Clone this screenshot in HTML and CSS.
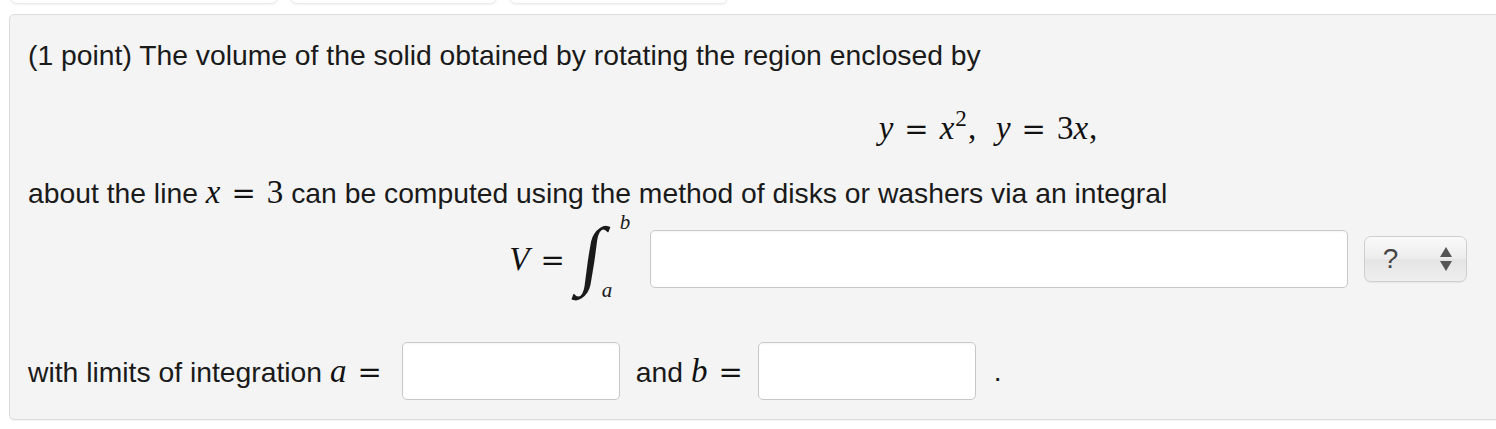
FILE: index.html
```html
<!DOCTYPE html>
<html>
<head>
<meta charset="utf-8">
<link rel="stylesheet" href="styles.css">
</head>
<body>
<div class="tabs">
  <div class="tab tab-a"></div>
  <div class="tab tab-b"></div>
  <div class="tab tab-c"></div>
</div>
<div class="problem">
  <p class="line first">(1 point) The volume of the solid obtained by rotating the region enclosed by</p>
  <div class="display"><span class="m"><i>y</i><span class="eq">=</span><i>x</i><sup>2</sup><span class="comma">,</span><span class="gap"></span><i>y</i><span class="eq">=</span>3<i>x</i><span class="comma">,</span></span></div>
  <p class="line second">about the line <span class="m"><i>x</i><span class="eq">=</span>3</span> can be computed using the method of disks or washers via an integral</p>
  <div class="integral-row">
    <span class="m lhs"><i>V</i><span class="eq">=</span></span>
    <span class="int"><span class="int-sign">∫</span><span class="limits"><i class="lim up">b</i><i class="lim lo">a</i></span></span>
    <div class="input wide"></div>
    <div class="select"><span class="q">?</span><svg class="arrows" width="14" height="26" viewBox="0 0 14 26"><path d="M7 1 L13 11 L1 11 Z" fill="#555"/><path d="M1 15 L13 15 L7 25 Z" fill="#555"/></svg></div>
  </div>
  <div class="limits-row">
    <span>with limits of integration <span class="m"><i>a</i><span class="eq">=</span></span></span>
    <div class="input small first-input"></div>
    <span>and <span class="m"><i>b</i><span class="eq">=</span></span></span>
    <div class="input small second-input"></div>
    <span class="dot">.</span>
  </div>
</div>
</body>
</html>
```

FILE: styles.css
```css
html, body {
  margin: 0;
  padding: 0;
  background: #ffffff;
  overflow: hidden;
}
body {
  width: 1496px;
  height: 429px;
  font-family: "Liberation Sans", Arial, sans-serif;
  font-size: 28.3px;
  color: #1a1a1a;
}
.tabs {
  display: flex;
  gap: 12px;
  padding-left: 10px;
  margin-top: -40px;
  height: 43px;
}
.tab {
  height: 42px;
  background: #ffffff;
  border: 1px solid #ececec;
  border-radius: 7px;
  box-shadow: 0 1px 2px rgba(0,0,0,0.06);
}
.tab-a { width: 266px; }
.tab-b { width: 205px; }
.tab-c { width: 217px; }
.problem {
  margin: 11px 0 0 9px;
  width: 1920px;
  padding: 23px 18px 19px 18px;
  background: #f4f4f4;
  border: 1px solid #dcdcdc;
  border-radius: 5px;
  box-shadow: 0 1px 1px rgba(0,0,0,0.04);
}
.line {
  margin: 0;
  line-height: 34px;
}
.m {
  font-family: "Liberation Serif", "Times New Roman", serif;
  font-size: 33px;
  color: #111;
}
.m i {
  font-style: italic;
}
.eq {
  font-family: "DejaVu Serif", serif;
  font-size: 29px;
  padding: 0 0.38em;
}
.m sup {
  font-size: 0.7em;
  vertical-align: 0.55em;
  line-height: 0;
  margin-left: 1px;
}
.comma { margin-left: 1px; }
.gap { display: inline-block; width: 0.6em; }
.display {
  text-align: center;
  margin-top: 36px;
  height: 40px;
  line-height: 40px;
}
.second {
  margin-top: 27px;
}
.integral-row {
  display: flex;
  justify-content: center;
  align-items: center;
  height: 82px;
  margin-top: 8px;
}
.lhs {
  white-space: nowrap;
}
.int {
  display: flex;
  align-items: stretch;
  width: 74px;
  height: 82px;
}
.int-sign {
  font-family: "Liberation Serif", serif;
  font-size: 76px;
  line-height: 82px;
  width: 30px;
  margin-left: 6px;
  transform: translateY(-5px) skewX(-8deg);
}
.limits {
  display: flex;
  flex-direction: column;
  justify-content: space-between;
  font-family: "Liberation Serif", serif;
  font-size: 21px;
  line-height: 20px;
}
.lim.up { margin-left: 8px; margin-top: -6px; }
.lim.lo { margin-left: -10px; margin-bottom: 0; }
.input {
  background: #ffffff;
  border: 1px solid #c8c8c8;
  border-radius: 5px;
  box-shadow: inset 0 1px 2px rgba(0,0,0,0.04);
  box-sizing: border-box;
}
.input.wide {
  width: 698px;
  height: 58px;
}
.select {
  margin-left: 16px;
  width: 103px;
  height: 46px;
  box-sizing: border-box;
  border: 1px solid #cfcfcf;
  border-radius: 7px;
  background: linear-gradient(#fafafa, #ececec 50%, #e4e4e4 51%, #efefef);
  box-shadow: 0 1px 1px rgba(0,0,0,0.06);
  display: flex;
  align-items: center;
  justify-content: space-between;
  padding: 0 13px 0 18px;
  color: #444;
}
.q {
  font-size: 28px;
}
.limits-row {
  display: flex;
  align-items: center;
  margin-top: 42px;
  height: 58px;
}
.input.small {
  width: 218px;
  height: 58px;
}
.first-input {
  margin: 0 16px 0 9px;
}
.second-input {
  margin: 0 18px 0 4px;
}
.dot {
  margin-left: 0;
}
```
